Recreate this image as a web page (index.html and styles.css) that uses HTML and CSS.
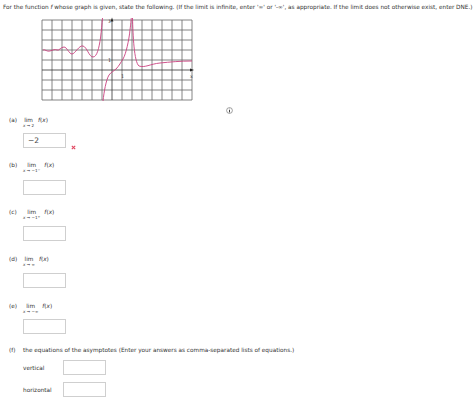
FILE: index.html
```html
<!DOCTYPE html>
<html>
<head>
<meta charset="utf-8">
<link rel="stylesheet" href="styles.css">
</head>
<body>
<p class="intro">For the function <i>f</i> whose graph is given, state the following. (If the limit is infinite, enter '∞' or '-∞', as appropriate. If the limit does not otherwise exist, enter DNE.)</p>
<svg class="graph" width="160" height="90" viewBox="40 15 160 90">
  <g class="grid">
    <path d="M42,20V100M52,20V100M62,20V100M72,20V100M82,20V100M92,20V100M102,20V100M122,20V100M132,20V100M142,20V100M152,20V100M162,20V100M172,20V100M182,20V100M192,20V100"/>
    <path d="M42,20H192M42,30H192M42,40H192M42,50H192M42,60H192M42,80H192M42,90H192M42,100H192"/>
  </g>
  <g class="axes">
    <path d="M112,20V100M42,70H192"/>
    <path class="arrow" d="M112,17.5L110.6,21.5H113.4Z"/>
    <path class="arrow" d="M194,70L190,68.6V71.4Z"/>
  </g>
  <text class="lbl it" x="108.5" y="22">y</text>
  <text class="lbl it" x="190" y="77.5">x</text>
  <text class="lbl" x="108" y="62">1</text>
  <text class="lbl" x="121" y="77.5">1</text>
  <g class="curve">
    <path d="M43,50 C45,49 47,52 50,51 C53,50 55,49 57,50 C59,51 61,47 64,47 C67,47 69,54 72,54 C75,54 79,45 83,46 C87,47 89,57 93,57 C97,57 99,48 100.5,38 C101.5,30 102,24 102.5,18"/>
    <path d="M103,101 C104,92 106,80 109,75 C111,72 114,71 116,69 C119,66 121,62 123,59 C126,54 129,40 130,30 C130.8,24 131,20 131.3,18"/>
    <path d="M132.5,18 C133,35 134,62 139,66 C145,68 150,64 160,63 C170,62 180,61 192,61"/>
  </g>
</svg>
<div class="info-row">
  <svg class="info" width="7" height="7" viewBox="0 0 7 7"><circle cx="3.5" cy="3.5" r="2.9"/><path d="M3.5,2.9V5.4"/><circle class="dot" cx="3.5" cy="1.9" r="0.45"/></svg>
</div>

<div class="part part-a">
  <div class="head">
    <span class="letter">(a)</span>
    <span class="lim"><span class="l">lim</span><span class="sub"><i>x</i> → 2</span></span>
    <span class="fx"><i>f</i>(<i>x</i>)</span>
  </div>
  <div class="answer graded">
    <div class="box"><span class="val">−2</span></div>
    <svg class="wrong" width="5" height="5" viewBox="0 0 5 5"><path d="M0.8,0.8L4.2,4.2M4.2,0.8L0.8,4.2"/></svg>
  </div>
</div>

<div class="part">
  <div class="head">
    <span class="letter">(b)</span>
    <span class="lim"><span class="l">lim</span><span class="sub tall"><i>x</i> → −1<sup>−</sup></span></span>
    <span class="fx"><i>f</i>(<i>x</i>)</span>
  </div>
  <div class="answer"><div class="box"></div></div>
</div>

<div class="part">
  <div class="head">
    <span class="letter">(c)</span>
    <span class="lim"><span class="l">lim</span><span class="sub tall"><i>x</i> → −1<sup>+</sup></span></span>
    <span class="fx"><i>f</i>(<i>x</i>)</span>
  </div>
  <div class="answer"><div class="box"></div></div>
</div>

<div class="part part-d">
  <div class="head">
    <span class="letter">(d)</span>
    <span class="lim"><span class="l">lim</span><span class="sub"><i>x</i> → ∞</span></span>
    <span class="fx"><i>f</i>(<i>x</i>)</span>
  </div>
  <div class="answer"><div class="box"></div></div>
</div>

<div class="part part-e">
  <div class="head">
    <span class="letter">(e)</span>
    <span class="lim"><span class="l">lim</span><span class="sub"><i>x</i> → −∞</span></span>
    <span class="fx"><i>f</i>(<i>x</i>)</span>
  </div>
  <div class="answer"><div class="box"></div></div>
</div>

<div class="part-f">
  <div class="head">
    <span class="letter">(f)</span>
    <span>the equations of the asymptotes (Enter your answers as comma-separated lists of equations.)</span>
  </div>
  <div class="asym-row"><span class="asym-label">vertical</span><div class="box"></div></div>
  <div class="asym-row"><span class="asym-label">horizontal</span><div class="box"></div></div>
</div>
</body>
</html>
```
FILE: styles.css
```css
html, body {
  margin: 0;
  padding: 0;
  background: #fff;
}
body {
  font-family: "DejaVu Sans", Verdana, sans-serif;
  font-size: 5.75px;
  color: #333;
  width: 474px;
  height: 402px;
  overflow: hidden;
}
.intro {
  margin: 0;
  padding: 3px 0 0 3px;
  line-height: 8px;
  white-space: nowrap;
}
.graph {
  display: block;
  margin: 4px 0 0 40px;
}
.grid path {
  stroke: #666;
  stroke-width: 0.8;
  fill: none;
}
.axes path {
  stroke: #333;
  stroke-width: 0.8;
  fill: none;
}
.axes .arrow {
  fill: #222;
  stroke: none;
}
.lbl {
  font-family: "DejaVu Serif", serif;
  font-size: 5px;
  fill: #333;
}
.lbl.it {
  font-style: italic;
}
.curve path {
  stroke: #c9417f;
  stroke-width: 0.9;
  fill: none;
}
.info-row {
  padding-left: 226px;
  margin-top: 2px;
  height: 8px;
}
.info {
  display: block;
}
.info circle {
  fill: none;
  stroke: #777;
  stroke-width: 0.7;
}
.info path {
  stroke: #444;
  stroke-width: 1;
}
.info .dot {
  fill: #444;
  stroke: none;
}
.part {
  padding-left: 9px;
  margin-top: 14px;
}
.part-a {
  margin-top: 1.5px;
}
.part-d, .part-e {
  margin-top: 15px;
}
.head {
  display: flex;
  align-items: flex-start;
  line-height: 6px;
}
.letter {
  width: 14px;
  flex: none;
}
.lim {
  display: inline-flex;
  flex-direction: column;
  align-items: center;
}
.lim .sub {
  font-size: 4.1px;
  line-height: 5px;
  white-space: nowrap;
}
.lim .sub.tall {
  line-height: 6px;
}
.lim sup {
  font-size: 3.4px;
  vertical-align: 1.4px;
  line-height: 0;
}
.fx {
  margin-left: 4px;
}
.answer {
  margin: 5.5px 0 0 14px;
}
.answer.graded {
  display: grid;
  grid-template-columns: 43px 5px;
  column-gap: 5px;
  align-items: end;
  width: 53px;
}
.box {
  box-sizing: border-box;
  width: 43px;
  height: 15px;
  border: 1px solid #cfcfcf;
  background: #fff;
  display: flex;
  align-items: center;
}
.val {
  font-size: 7.5px;
  color: #444;
  padding-left: 4px;
}
.wrong {
  display: block;
  margin-bottom: -2px;
}
.wrong path {
  stroke: #e0455f;
  stroke-width: 1.1;
}
.part-f {
  padding-left: 9px;
  margin-top: 13px;
}
.asym-row {
  display: flex;
  align-items: center;
  margin-left: 14px;
  margin-top: 7px;
}
.asym-label {
  width: 39.5px;
}
```
